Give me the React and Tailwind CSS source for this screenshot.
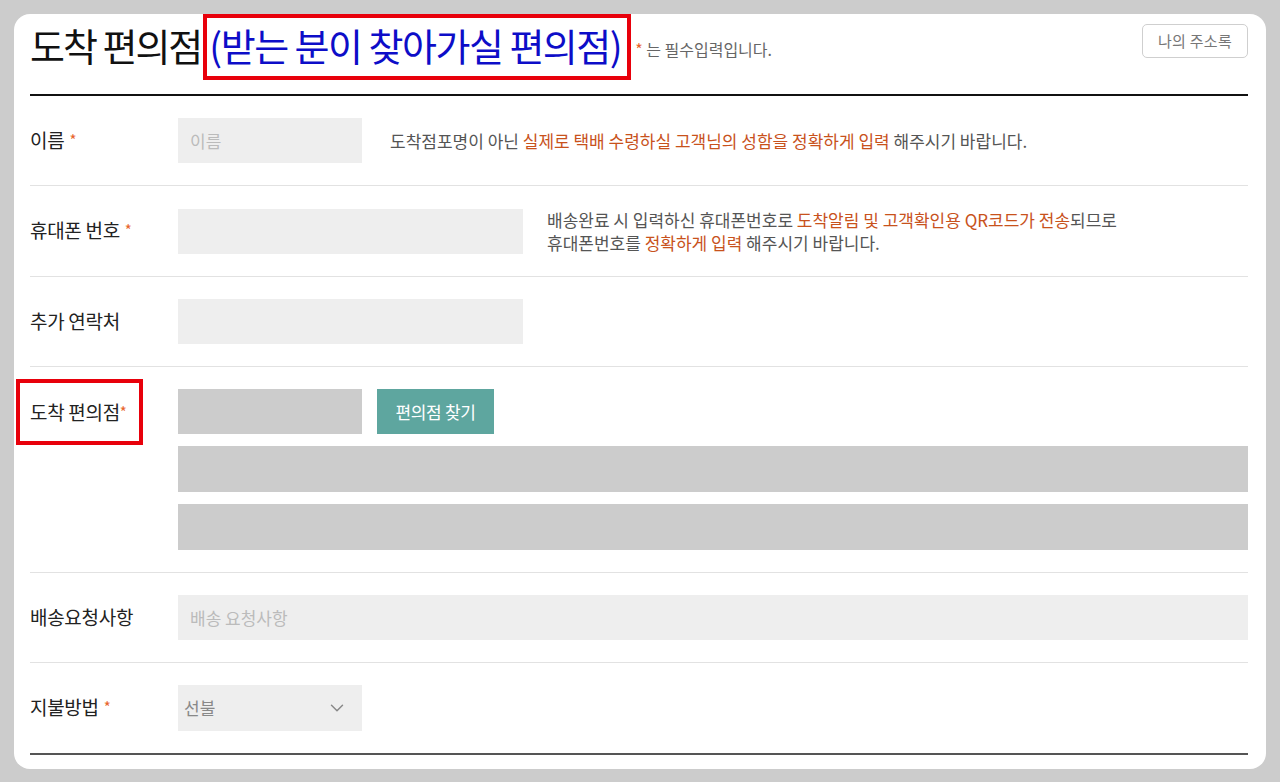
import { ChevronDown } from 'lucide-react';

const font = { fontFamily: '"Noto Sans CJK KR", "Noto Sans", sans-serif' };

function Star() {
  return <span className="ml-[5px] text-[15px] text-[#e8642c]">*</span>;
}

function Row({ label, required, children, last }) {
  return (
    <div className={`flex items-start py-[22px] ${last ? '' : 'border-b border-[#e2e2e2]'}`}>
      <div className="flex h-[45px] w-[148px] shrink-0 items-center text-[19px] tracking-[-0.3px] text-[#222]">
        {label}
        {required && <Star />}
      </div>
      <div className="flex-1">{children}</div>
    </div>
  );
}

const Orange = ({ children }) => <span className="text-[#c8521c]">{children}</span>;

export default function App() {
  return (
    <div style={font} className="min-h-[782px] bg-[#cccccc] p-[14px]">
      <div className="rounded-[16px] bg-white px-[16px] pb-[14px] pr-[18px]">
        {/* header */}
        <div className="flex h-[80px] items-start justify-between">
          <div className="flex items-center">
            <span className="pb-[4px] text-[38px] leading-none tracking-[-2px] text-[#111]">도착 편의점</span>
            <span className="ml-[2px] flex h-[66px] items-center border-4 border-[#e8000b] pb-[4px] pl-[2px] pr-[6px] text-[38px] leading-none tracking-[-1.5px] text-[#0d0dc8]">
              (받는 분이 찾아가실 편의점)
            </span>
            <span className="ml-[4px] mt-[4px] text-[16px] leading-none text-[#666]">
              <span className="text-[#e8642c]">*</span> 는 필수입력입니다.
            </span>
          </div>
          <button className="mt-[10px] h-[34px] w-[106px] rounded-[5px] border border-[#cfcfcf] bg-white text-[15px] tracking-[0.3px] text-[#777]">
            나의 주소록
          </button>
        </div>
        <div className="h-[2px] bg-[#111]" />

        <Row label="이름" required>
          <div className="flex items-center">
            <div className="flex h-[45px] w-[184px] items-center bg-[#eeeeee] px-[12px] text-[17px] text-[#bbbbbb]">이름</div>
            <p className="ml-[28px] text-[17px] text-[#555]">
              도착점포명이 아닌 <Orange>실제로 택배 수령하실 고객님의 성함을 정확하게 입력</Orange> 해주시기 바랍니다.
            </p>
          </div>
        </Row>

        <Row label="휴대폰 번호" required>
          <div className="flex items-center">
            <div className="h-[45px] w-[345px] bg-[#eeeeee]" />
            <p className="ml-[24px] text-[17px] leading-[23px] text-[#555]">
              배송완료 시 입력하신 휴대폰번호로 <Orange>도착알림 및 고객확인용 QR코드가 전송</Orange>되므로
              <br />
              휴대폰번호를 <Orange>정확하게 입력</Orange> 해주시기 바랍니다.
            </p>
          </div>
        </Row>

        <Row label="추가 연락처">
          <div className="h-[45px] w-[345px] bg-[#eeeeee]" />
        </Row>

        <div className="flex items-start border-b border-[#e2e2e2] py-[22px]">
          <div className="w-[148px] shrink-0">
            <div className="-mt-[10px] -ml-[14px] flex h-[66px] w-[127px] items-center border-4 border-[#e8000b] pl-[10px] text-[19px] tracking-[-0.3px] text-[#222]">
              도착 편의점<span className="text-[15px] text-[#e8642c]">*</span>
            </div>
          </div>
          <div className="flex flex-1 flex-col gap-[12px]">
            <div className="flex items-center gap-[15px]">
              <div className="h-[45px] w-[184px] bg-[#cccccc]" />
              <button className="h-[45px] w-[117px] bg-[#5ea69f] text-[17px] tracking-[-0.3px] text-white">편의점 찾기</button>
            </div>
            <div className="h-[46px] bg-[#cccccc]" />
            <div className="h-[46px] bg-[#cccccc]" />
          </div>
        </div>

        <Row label="배송요청사항">
          <div className="flex h-[45px] items-center bg-[#eeeeee] px-[12px] text-[17px] text-[#bbbbbb]">배송 요청사항</div>
        </Row>

        <Row label="지불방법" required last>
          <div className="flex h-[46px] w-[184px] items-center justify-between bg-[#eeeeee] pl-[6px] pr-[14px] text-[17px] text-[#888]">
            선불
            <ChevronDown size={22} strokeWidth={1.6} className="text-[#888]" />
          </div>
        </Row>
        <div className="h-[2px] bg-[#555]" />
      </div>
    </div>
  );
}
